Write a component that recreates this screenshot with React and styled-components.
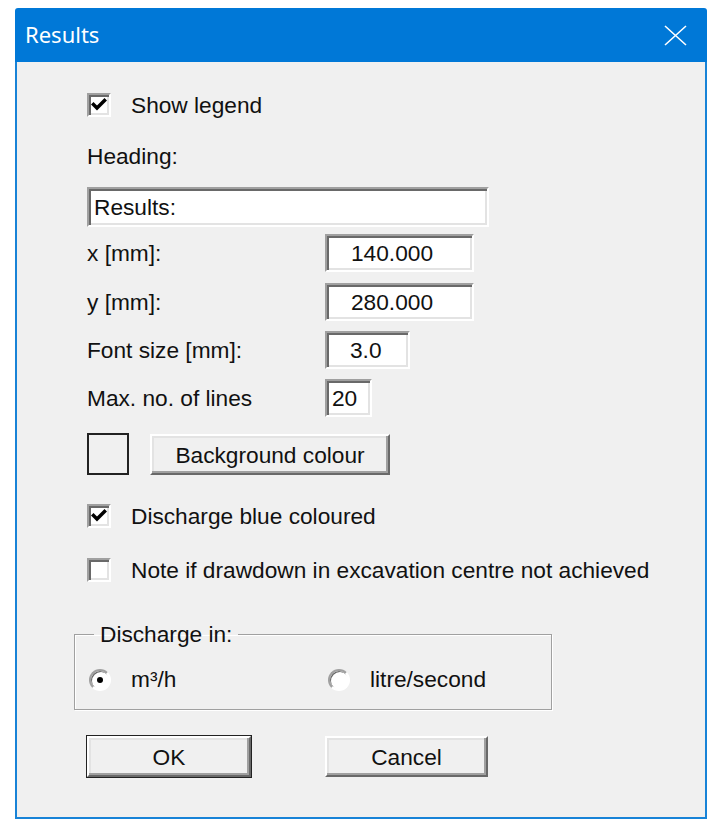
import React from 'react'
import styled, {createGlobalStyle} from 'styled-components';

const Global = createGlobalStyle`
body {
  margin:0;
  background:#fff;
  font-family:"Liberation Sans", Arial, sans-serif;
}
`;

const Window = styled.div`
margin: 8px 0 0 15px;
width:692px;
display:flex;
flex-direction:column;
`;

const TitleBar = styled.div`
height:54px;
background:#0078d7;
border-radius:3px 3px 0 0;
display:flex;
align-items:center;
justify-content:space-between;
padding: 0 20px 0 10px;
color:#fff;
`;

const Title = styled.span`
font-family:"Noto Sans", "Liberation Sans", sans-serif;
font-size:22px;
margin-top:-2px;
`;

const Client = styled.div`
height:757px;
box-sizing:border-box;
background:#f0f0f0;
border:2px solid #1883d7;
border-top:none;
padding: 30px 0 0 70px;
display:flex;
flex-direction:column;
font-size:22.7px;
color:#111;
`;

const Row = styled.div`
display:flex;
align-items:center;
height:${p => p.h || 26}px;
margin-top:${p => p.mt || 0}px;
`;

const Label = styled.span`
width:${p => p.w || 'auto'};
flex-shrink:0;
`;

const CheckBox = styled.span`
box-sizing:border-box;
width:24px;
height:24px;
background:#fff;
border:2px solid;
border-color:#a0a0a0 #fff #fff #a0a0a0;
box-shadow: inset 2px 2px 0 #696969, inset -2px -2px 0 #e3e3e3;
display:flex;
align-items:center;
justify-content:center;
margin-right:20px;
`;

const Field = styled.div`
box-sizing:border-box;
width:${p => p.w}px;
height:${p => p.h || 38}px;
background:#fff;
border:2px solid;
border-color:#a0a0a0 #fff #fff #a0a0a0;
box-shadow: inset 2px 2px 0 #696969, inset -2px -2px 0 #e3e3e3;
padding-left:${p => p.indent}px;
display:flex;
align-items:center;
`;

const ColourSwatch = styled.div`
box-sizing:border-box;
width:42px;
height:42px;
border:2px solid #222;
margin-right:21px;
`;

const Button = styled.button`
box-sizing:border-box;
width:${p => p.w}px;
height:41px;
font-family:"Liberation Sans", Arial, sans-serif;
font-size:22.7px;
color:#111;
background:#f0f0f0;
border:2px solid;
border-color:#fff #696969 #696969 #fff;
box-shadow: inset -2px -2px 0 #a0a0a0, inset 2px 2px 0 #e3e3e3;
outline:${p => p.primary ? '1px solid #222' : 'none'};
padding:2px 0 0;
`;

const Group = styled.fieldset`
margin: 38px 0 0 -13px;
width:478px;
box-sizing:border-box;
border:1px solid #a0a0a0;
box-shadow: inset 1px 1px 0 #fff, 1px 1px 0 #fff;
padding: 19px 0 17px 14px;
`;

const Legend = styled.legend`
line-height:26px;
padding:0 6px;
margin-left:5px;
`;

const RadioRow = styled.div`
display:grid;
grid-template-columns:239px auto;
height:26px;
align-items:center;
`;

const RadioItem = styled.label`
display:flex;
align-items:center;
`;

const Radio = styled.span`
box-sizing:border-box;
width:22px;
height:22px;
border-radius:50%;
background:#fff;
border:2px solid;
border-color:#a0a0a0 #fff #fff #a0a0a0;
box-shadow: inset 1px 1px 0 #696969;
display:flex;
align-items:center;
justify-content:center;
margin-right:20px;
&::after {
  content:"";
  width:6px;
  height:6px;
  border-radius:50%;
  background:${p => p.on ? '#000' : 'transparent'};
}
`;

const ButtonRow = styled.div`
display:flex;
gap:74px;
margin-top:26px;
`;

function Check({on}) {
  return (
    <CheckBox>
      {on && <svg width="16" height="14" viewBox="0 0 16 14">
        <path d="M2.5 6.5 L6 10 L13.5 2.5" stroke="#000" strokeWidth="3.5" fill="none" strokeLinecap="square"/>
      </svg>}
    </CheckBox>
  )
}

function App() {
  return (
    <>
      <Global/>
      <Window>
        <TitleBar>
          <Title>Results</Title>
          <svg width="23" height="21" viewBox="0 0 23 21">
            <path d="M1 1 L22 20 M22 1 L1 20" stroke="#fff" strokeWidth="1.6"/>
          </svg>
        </TitleBar>
        <Client>
          <Row><Check on/>Show legend</Row>
          <Row mt={24} h={28}><Label>Heading:</Label></Row>
          <Row mt={17} h={40}><Field w={402} h={40} indent={5}>Results:</Field></Row>
          <Row mt={7} h={38}><Label w="238px">x [mm]:</Label><Field w={149} indent={24}>140.000</Field></Row>
          <Row mt={11} h={38}><Label w="238px">y [mm]:</Label><Field w={149} indent={24}>280.000</Field></Row>
          <Row mt={10} h={38}><Label w="238px">Font size [mm]:</Label><Field w={85} indent={23}>3.0</Field></Row>
          <Row mt={10} h={38}><Label w="238px">Max. no. of lines</Label><Field w={47} indent={5}>20</Field></Row>
          <Row mt={16} h={42}><ColourSwatch/><Button w={240}>Background colour</Button></Row>
          <Row mt={28}><Check on/>Discharge blue coloured</Row>
          <Row mt={28}><Check/>Note if drawdown in excavation centre not achieved</Row>
          <Group>
            <Legend>Discharge in:</Legend>
            <RadioRow>
              <RadioItem><Radio on/>m³/h</RadioItem>
              <RadioItem><Radio/>litre/second</RadioItem>
            </RadioRow>
          </Group>
          <ButtonRow>
            <Button w={164} primary>OK</Button>
            <Button w={163}>Cancel</Button>
          </ButtonRow>
        </Client>
      </Window>
    </>
  )
}

export default App
